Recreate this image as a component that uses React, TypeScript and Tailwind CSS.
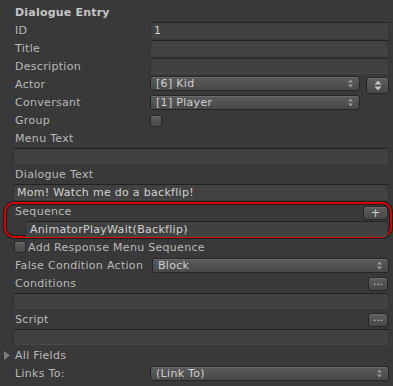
const FONT = { fontFamily: '"DejaVu Sans", "Liberation Sans", sans-serif' };

function Arrows({ big = false }: { big?: boolean }) {
  if (big) {
    return (
      <svg width="8" height="11" viewBox="0 0 8 11" className="block">
        <path d="M0.5 4.5L4 0.5L7.5 4.5Z" fill="#c4c4c4" />
        <path d="M0.5 6.5L4 10.5L7.5 6.5Z" fill="#c4c4c4" />
      </svg>
    );
  }
  return (
    <svg width="5" height="9" viewBox="0 0 5 9" className="block">
      <path d="M0 3.5L2.5 0.5L5 3.5Z" fill="#9a9a9a" />
      <path d="M0 5.5L2.5 8.5L5 5.5Z" fill="#9a9a9a" />
    </svg>
  );
}

function TextField({ value = "", className = "" }: { value?: string; className?: string }) {
  return (
    <div
      className={`h-[16px] bg-[#414141] border-t border-t-[#222222] border-x border-x-[#333333] border-b border-b-[#474747] rounded-[2px] flex items-center px-[3px] text-[11px] text-[#d2d2d2] leading-none ${className}`}
    >
      {value}
    </div>
  );
}

function Popup({ value, className = "" }: { value: string; className?: string }) {
  return (
    <div
      className={`h-[15px] rounded-[3px] border border-[#262626] bg-gradient-to-b from-[#5c5c5c] to-[#484848] shadow-[inset_0_1px_0_#6a6a6a] flex items-center justify-between pl-[5px] pr-[6px] text-[11px] text-[#cfcfcf] leading-none ${className}`}
    >
      <span>{value}</span>
      <Arrows />
    </div>
  );
}

function SmallButton({ children, className = "" }: { children: React.ReactNode; className?: string }) {
  return (
    <div
      className={`rounded-[3px] border border-[#262626] bg-gradient-to-b from-[#5e5e5e] to-[#474747] shadow-[inset_0_1px_0_#6c6c6c] flex items-center justify-center text-[#d0d0d0] leading-none tracking-normal ${className}`}
    >
      {children}
    </div>
  );
}

function Checkbox() {
  return (
    <div className="w-[12px] h-[12px] shrink-0 rounded-[2px] border border-[#2a2a2a] bg-gradient-to-b from-[#5e5e5e] to-[#4a4a4a] shadow-[inset_0_1px_0_#6a6a6a]" />
  );
}

function Row({ label, children }: { label: string; children?: React.ReactNode }) {
  return (
    <div className="h-[18px] flex items-center">
      <div className="w-[135px] shrink-0 text-[11px] text-[#bababa] leading-none">{label}</div>
      <div className="flex-1 min-w-0">{children}</div>
    </div>
  );
}

function Label({ text }: { text: string }) {
  return <div className="h-[18px] flex items-center text-[11px] text-[#bababa] leading-none">{text}</div>;
}

function FullField({ value = "" }: { value?: string }) {
  return (
    <div className="h-[18px] flex items-center -ml-[2px]">
      <TextField value={value} className="flex-1" />
    </div>
  );
}

export default function App() {
  return (
    <div className="w-[393px] h-[386px] bg-[#393939] overflow-hidden relative tracking-[0.3px]" style={FONT}>
      <div className="pt-[3px] pl-[15px] pr-[4px]">
        <div className="h-[18px] flex items-center text-[11px] font-bold text-[#c6c6c6] leading-none tracking-[0.2px]">
          Dialogue Entry
        </div>
        <Row label="ID">
          <TextField value="1" />
        </Row>
        <Row label="Title">
          <TextField />
        </Row>
        <Row label="Description">
          <TextField />
        </Row>
        <Row label="Actor">
          <div className="flex items-start gap-[6px] pt-[2px]">
            <Popup value="[6] Kid" className="w-[210px] mt-[-1px]" />
            <SmallButton className="w-[23px] h-[17px]">
              <Arrows big />
            </SmallButton>
          </div>
        </Row>
        <Row label="Conversant">
          <Popup value="[1] Player" className="w-[210px]" />
        </Row>
        <Row label="Group">
          <div className="pt-[2px]">
            <Checkbox />
          </div>
        </Row>
        <Label text="Menu Text" />
        <FullField />
        <Label text="Dialogue Text" />
        <FullField value="Mom! Watch me do a backflip!" />

        <div className="-ml-[11px] -mr-[3px] mt-[1px] h-[36px] rounded-[10px] border-2 border-[#d40404] shadow-[0_0_0_1px_#1e1e1e,inset_0_0_0_1px_#241818] pl-[9px] pr-[2px]">
          <div className="h-[17px] flex items-center justify-between">
            <span className="text-[11px] text-[#bababa] leading-none pb-[2px]">Sequence</span>
            <SmallButton className="w-[25px] h-[14px] mt-[1px] text-[12px]">+</SmallButton>
          </div>
          <div className="h-[16px] flex items-center pl-[10px]">
            <TextField value="AnimatorPlayWait(Backflip)" className="flex-1 pl-[4px]" />
          </div>
        </div>

        <div className="h-[18px] flex items-center -ml-[1px] gap-[2px]">
          <Checkbox />
          <span className="text-[11px] text-[#bababa] leading-none">Add Response Menu Sequence</span>
        </div>
        <Row label="False Condition Action">
          <Popup value="Block" className="ml-[2px]" />
        </Row>
        <div className="h-[18px] flex items-center justify-between">
          <span className="text-[11px] text-[#bababa] leading-none">Conditions</span>
          <SmallButton className="w-[20px] h-[14px] mr-[1px] mt-[1px] text-[10px] pb-[3px]">...</SmallButton>
        </div>
        <FullField />
        <div className="h-[18px] flex items-center justify-between">
          <span className="text-[11px] text-[#bababa] leading-none">Script</span>
          <SmallButton className="w-[20px] h-[14px] mr-[1px] mt-[1px] text-[10px] pb-[3px]">...</SmallButton>
        </div>
        <FullField />
        <div className="h-[18px] flex items-center relative">
          <svg width="6" height="9" viewBox="0 0 6 9" className="absolute left-[-11px] top-[5px]">
            <path d="M0 0L6 4.5L0 9Z" fill="#7c7c7c" />
          </svg>
          <span className="text-[11px] text-[#bababa] leading-none">All Fields</span>
        </div>
        <Row label="Links To:">
          <Popup value="(Link To)" />
        </Row>
      </div>
    </div>
  );
}
